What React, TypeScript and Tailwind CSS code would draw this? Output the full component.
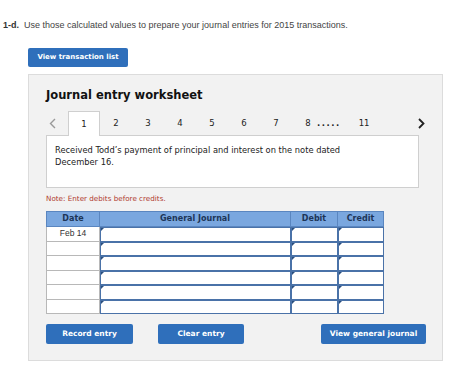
import { useState } from 'react';

const tabs = ['1', '2', '3', '4', '5', '6', '7', '8'];

function Marker() {
  return <span className="absolute left-0 top-0 w-0 h-0 border-t-[3px] border-r-[3px] border-t-[#2b4f7e] border-r-transparent" />;
}

function InputCell({ w }: { w: string }) {
  return (
    <div className={`relative ${w} h-full bg-white border-[1.5px] border-[#4a72a8]`}>
      <Marker />
    </div>
  );
}

export default function App() {
  const [active, setActive] = useState('1');
  const rows = [0, 1, 2, 3, 4, 5];

  return (
    <div className="w-[474px] h-[384px] bg-white overflow-hidden font-['DejaVu_Sans',sans-serif]">
      <p className="pt-[19px] pl-[3px] text-[9px] leading-[12px] text-[#444] font-['Liberation_Sans',Arial,sans-serif]">
        <span className="font-bold text-[#333]">1-d.</span>
        <span className="ml-[5px]">Use those calculated values to prepare your journal entries for 2015 transactions.</span>
      </p>

      <button className="ml-[28px] mt-[17px] w-[100px] h-[19px] rounded-[2px] bg-[#2f6fbb] text-white text-[7px] font-bold">
        View transaction list
      </button>

      <div className="ml-[28px] mt-[7px] w-[415px] h-[287px] bg-[#f2f2f2] border border-[#dcdcdc] pl-[17px] pt-[12px]">
        <h2 className="text-[11.5px] leading-[16px] font-bold text-[#111]">Journal entry worksheet</h2>

        <div className="flex items-end h-[25px] mt-[8px] relative z-10">
          <span className="w-[22px] pl-[3px] h-[25px] flex items-center">
            <svg width="7" height="11" viewBox="0 0 7 11" fill="none" stroke="#999" strokeWidth="1.4">
              <path d="M6 1 1.5 5.5 6 10" />
            </svg>
          </span>
          {tabs.map((t) => (
            <button
              key={t}
              onClick={() => setActive(t)}
              className={
                t === active
                  ? 'w-[32px] h-[25px] bg-white border border-b-0 border-[#cfcfcf] text-[8.5px] text-[#222]'
                  : 'w-[32px] h-[25px] text-[8.5px] text-[#222]'
              }
            >
              {t}
            </button>
          ))}
          <span className="h-[25px] leading-[25px] -ml-[7px] text-[8.5px] text-[#222] font-bold tracking-[1.5px]">.....</span>
          <span className="h-[25px] leading-[25px] ml-[18px] text-[8.5px] text-[#222]">11</span>
          <span className="ml-auto mr-[17px] h-[25px] flex items-center">
            <svg width="7" height="11" viewBox="0 0 7 11" fill="none" stroke="#222" strokeWidth="1.8">
              <path d="M1 1 5.5 5.5 1 10" />
            </svg>
          </span>
        </div>

        <div className="w-[373px] h-[53px] -mt-px bg-white border border-[#cfcfcf] pl-[8px] pt-[9px] text-[8.3px] leading-[11.5px] text-[#222]">
          Received Todd’s payment of principal and interest on the note dated
          <br />
          December 16.
        </div>

        <p className="mt-[6px] text-[7.2px] leading-[9px] text-[#b03a2e]">Note: Enter debits before credits.</p>

        <div className="mt-[8px] w-[338px]">
          <div className="flex h-[16px] bg-[#7aa7df] border border-[#5a86c0] text-[8px] font-bold text-[#1d3557]">
            <div className="w-[53px] flex items-center justify-center border-r border-[#5a86c0]">Date</div>
            <div className="w-[191px] flex items-center justify-center border-r border-[#5a86c0]">General Journal</div>
            <div className="w-[47px] flex items-center justify-center border-r border-[#5a86c0]">Debit</div>
            <div className="flex-1 flex items-center justify-center">Credit</div>
          </div>
          {rows.map((r) => (
            <div key={r} className="flex h-[14.5px]">
              <div className="w-[54px] h-full bg-white border border-t-0 border-[#b8b8b8] text-[8.5px] leading-[13px] text-center text-[#333] font-['Liberation_Sans',Arial,sans-serif]">
                {r === 0 ? 'Feb 14' : ''}
              </div>
              <InputCell w="w-[191px]" />
              <InputCell w="w-[47px]" />
              <InputCell w="flex-1" />
            </div>
          ))}
        </div>

        <div className="flex mt-[10px] h-[20px] text-white text-[7.5px] font-bold">
          <button className="w-[87px] rounded-[2px] bg-[#2f6fbb]">Record entry</button>
          <button className="ml-[25px] w-[86px] rounded-[2px] bg-[#2f6fbb]">Clear entry</button>
          <button className="ml-[77px] w-[105px] rounded-[2px] bg-[#2f6fbb]">View general journal</button>
        </div>
      </div>
    </div>
  );
}
